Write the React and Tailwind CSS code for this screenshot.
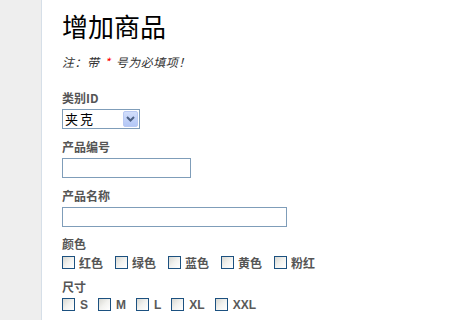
import { useState } from 'react';

const cjk = '"Noto Sans CJK SC", "Liberation Sans", sans-serif';

function Box({ checked, onChange }) {
  return (
    <span
      onClick={onChange}
      className="inline-block w-[13px] h-[13px] shrink-0 border border-[#1c5180] bg-gradient-to-br from-[#d8d8d2] via-[#f2f2ef] to-white"
    >
      {checked && <span className="block w-full h-full text-[10px] leading-[11px] text-center text-[#21a121]">✓</span>}
    </span>
  );
}

export default function App() {
  const [colors, setColors] = useState([]);
  const [sizes, setSizes] = useState([]);

  const toggle = (list, setList, v) =>
    setList(list.includes(v) ? list.filter(x => x !== v) : [...list, v]);

  const label = 'h-[16px] leading-[16px] text-[12px] font-bold text-[#555]';

  return (
    <div className="flex w-[465px] h-[320px] bg-white overflow-hidden" style={{ fontFamily: cjk }}>
      {/* left gutter */}
      <div className="w-[42px] shrink-0 bg-[#eeeeee] border-r border-[#d6dfe8]"></div>

      <div className="pl-[20px] flex flex-col">
        <h1 className="mt-[13px] h-[26px] leading-[26px] text-[26px] font-normal text-black">增加商品</h1>

        <p className="mt-[15px] h-[16px] leading-[16px] text-[12px] italic text-[#333] tracking-[0.5px]">
          注：带<span className="mx-[5px] text-[#ff0000]">*</span>号为必填项！
        </p>

        {/* category */}
        <div className={`mt-[20px] ${label}`}>类别ID</div>
        <div className="mt-[3px] flex items-center w-[78px] h-[20px] border border-[#7f9db9] bg-white pl-[2px] pr-[1px]">
          <span className="flex-1 text-[13px] leading-[18px] tracking-[2px] text-black">夹克</span>
          <span className="w-[15px] h-[16px] flex items-center justify-center rounded-[2px] border border-[#b9c9f3] bg-gradient-to-b from-[#d2defb] to-[#b3c7f6]">
            <svg width="9" height="6" viewBox="0 0 9 6">
              <path d="M1 1 L4.5 4.5 L8 1" fill="none" stroke="#4d6185" strokeWidth="2" />
            </svg>
          </span>
        </div>

        {/* product number */}
        <div className={`mt-[10px] ${label}`}>产品编号</div>
        <input className="mt-[3px] w-[129px] h-[20px] border border-[#7f9db9] bg-white px-[2px] text-[12px] outline-none" />

        {/* product name */}
        <div className={`mt-[10px] ${label}`}>产品名称</div>
        <input className="mt-[3px] w-[225px] h-[20px] border border-[#7f9db9] bg-white px-[2px] text-[12px] outline-none" />

        {/* colours */}
        <div className={`mt-[9px] ${label}`}>颜色</div>
        <div className="mt-[1px] h-[19px] flex items-center gap-x-[12px]">
          {['红色', '绿色', '蓝色', '黄色', '粉红'].map(c => (
            <div key={c} className="flex items-center">
              <Box checked={colors.includes(c)} onChange={() => toggle(colors, setColors, c)} />
              <span className="ml-[4px] text-[12px] leading-[16px] font-bold text-[#555]">{c}</span>
            </div>
          ))}
        </div>

        {/* sizes */}
        <div className={`mt-[7px] ${label}`}>尺寸</div>
        <div className="h-[19px] flex items-center gap-x-[10px]">
          {['S', 'M', 'L', 'XL', 'XXL'].map(s => (
            <div key={s} className="flex items-center">
              <Box checked={sizes.includes(s)} onChange={() => toggle(sizes, setSizes, s)} />
              <span
                className="ml-[5px] text-[12px] leading-[16px] font-bold text-[#5a5a5a]"
                style={{ fontFamily: '"Liberation Sans", sans-serif' }}
              >
                {s}
              </span>
            </div>
          ))}
        </div>
      </div>
    </div>
  );
}
